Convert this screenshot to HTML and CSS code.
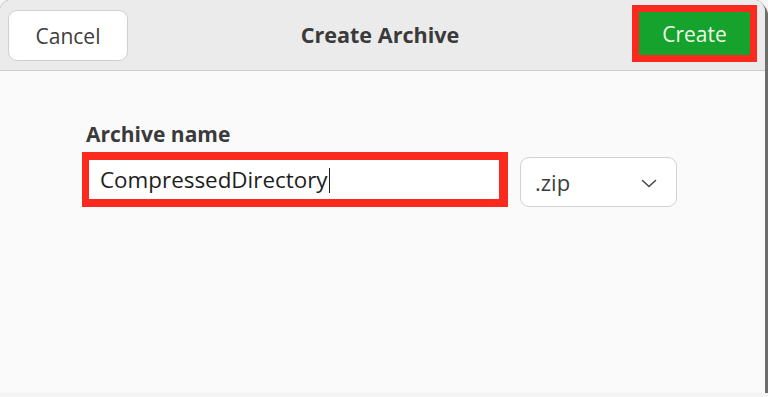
FILE: index.html
```html
<!DOCTYPE html>
<html lang="en">
<head>
    <meta charset="UTF-8">
    <meta name="viewport" content="width=device-width, initial-scale=1.0">
    <title>Create Archive</title>
    <link rel="stylesheet" href="styles.css">
</head>
<body>
    <div class="window">
        <header class="headerbar">
            <button class="btn btn-cancel">Cancel</button>
            <h1 class="title">Create Archive</h1>
            <button class="btn btn-create">Create</button>
        </header>

        <div class="content">
            <label class="field-label">Archive name</label>
            <div class="field-row">
                <div class="name-entry">CompressedDirectory<span class="caret"></span></div>
                <div class="format-select">
                    <span>.zip</span>
                    <svg class="chevron" width="16" height="9" viewBox="0 0 16 9">
                        <path d="M1.5 1.5 L8 7.5 L14.5 1.5" fill="none" stroke="#4a4a4a" stroke-width="1.6" stroke-linecap="round" stroke-linejoin="round"/>
                    </svg>
                </div>
            </div>
        </div>
    </div>
</body>
</html>
```

FILE: styles.css
```css
body {
    margin: 0;
    padding: 0;
    background-color: #f4f4f4;
    font-family: "Open Sans", "Noto Sans", sans-serif;
    color: #3d3d3d;
}
.window {
    width: 765px;
    height: 393px;
    background-color: #fafafa;
    border-radius: 12px 12px 0 0;
    box-shadow: 3px 3px 0 #6e6e6e, 0 0 0 1px #c9c9c9;
    overflow: hidden;
}
.headerbar {
    height: 70px;
    background-color: #ebebeb;
    border-bottom: 1px solid #cdcdcd;
    display: flex;
    align-items: flex-start;
    padding: 0 8px;
}
.btn {
    font-family: inherit;
    font-size: 21px;
    cursor: pointer;
}
.btn-cancel {
    margin-top: 10px;
    width: 120px;
    height: 51px;
    background-color: #fff;
    color: #3d3d3d;
    border: 1px solid #cfcfcf;
    border-radius: 9px;
}
.title {
    flex: 1;
    margin: 0;
    text-align: center;
    font-size: 21.6px;
    font-weight: bold;
    line-height: 70px;
    color: #3a3a3a;
}
.btn-create {
    margin-top: 5px;
    width: 125px;
    height: 57px;
    background-color: #15a22d;
    color: #eef8e6;
    border: 7px solid #fb2a1f;
    border-radius: 0;
}
.content {
    padding: 49px 0 0 86px;
}
.field-label {
    display: block;
    font-size: 21px;
    font-weight: bold;
    color: #3a3a3a;
    line-height: 28px;
}
.field-row {
    display: flex;
    align-items: flex-end;
    gap: 12px;
    margin-left: -4px;
    margin-top: 4px;
}
.name-entry {
    box-sizing: border-box;
    width: 426px;
    height: 55px;
    border: 8px solid #fb2a1f;
    border-left-width: 7px;
    border-right-width: 9px;
    background-color: #fff;
    font-size: 22.4px;
    line-height: 39px;
    padding-left: 11px;
    color: #1e1e1e;
}
.caret {
    display: inline-block;
    width: 1px;
    height: 25px;
    background-color: #1e1e1e;
    vertical-align: -5px;
    margin-left: 1px;
}
.format-select {
    box-sizing: border-box;
    width: 157px;
    height: 50px;
    background-color: #fff;
    border: 1px solid #d2d2d2;
    border-radius: 9px;
    display: flex;
    align-items: center;
    justify-content: space-between;
    padding: 0 19px 0 14px;
    font-size: 22px;
    color: #3d3d3d;
}
.chevron {
    margin-top: 2px;
}
```
